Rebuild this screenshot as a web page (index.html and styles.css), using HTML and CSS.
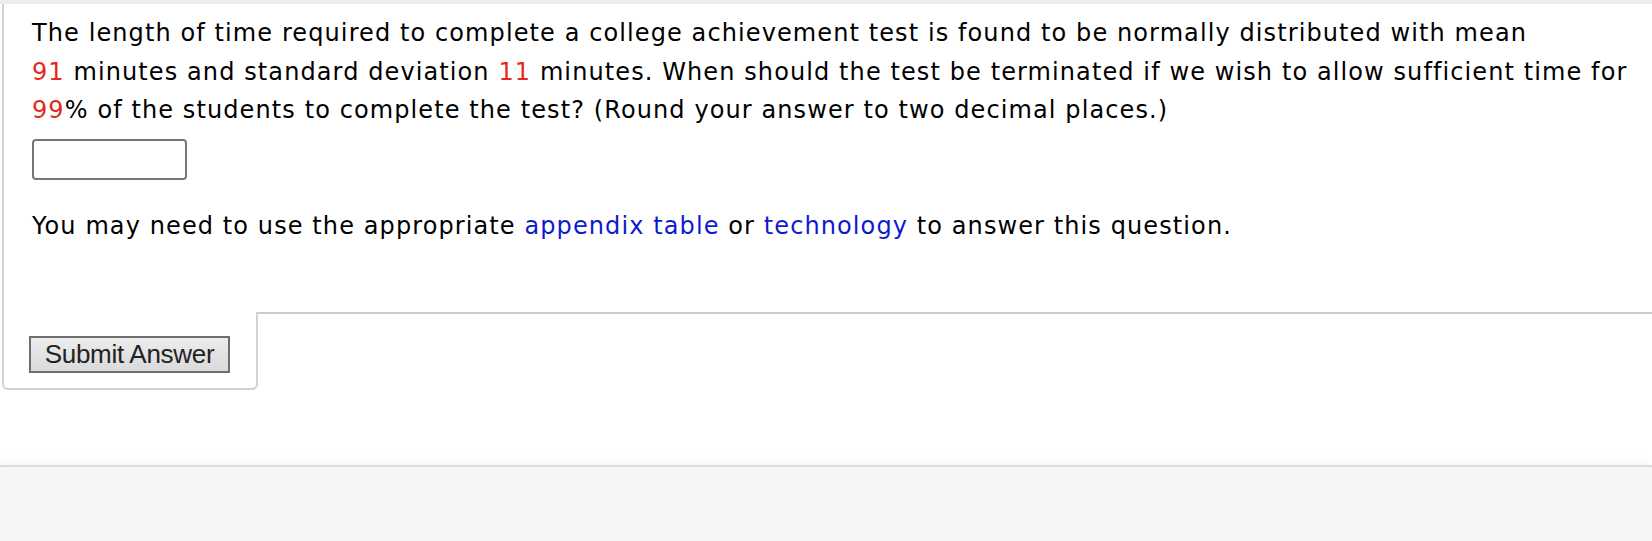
FILE: index.html
```html
<!DOCTYPE html>
<html lang="en">
<head>
    <meta charset="UTF-8">
    <title>Question</title>
    <link rel="stylesheet" href="styles.css">
</head>
<body>
    <div class="page">
        <div class="question">
            <p class="question-text">
                The length of time required to complete a college achievement test is found to be normally distributed with mean<br>
                <span class="num">91</span> minutes and standard deviation <span class="num">11</span> minutes. When should the test be terminated if we wish to allow sufficient time for
                <span class="num">99</span>% of the students to complete the test? (Round your answer to two decimal places.)
            </p>
            <input class="answer-input" type="text">
            <p class="hint">
                You may need to use the appropriate <a href="#" class="link">appendix table</a> or <a href="#" class="link">technology</a> to answer this question.
            </p>
        </div>
        <div class="action-row">
            <div class="submit-tab">
                <button class="submit-button">Submit Answer</button>
            </div>
            <div class="action-rest"></div>
        </div>
    </div>
    <div class="footer"></div>
</body>
</html>
```

FILE: styles.css
```css
* {
    margin: 0;
    padding: 0;
    box-sizing: border-box;
}

body {
    font-family: Verdana, 'DejaVu Sans', sans-serif;
    background: #fff;
    color: #000;
    width: 1652px;
    height: 541px;
    overflow: hidden;
    border-top: 4px solid #ededed;
}

.page {
    height: 461px;
    margin-left: 2px;
}

.question {
    border-left: 2px solid #d2d2d2;
    padding: 10px 4px 0 28px;
    height: 308px;
}

.question-text,
.hint {
    font-size: 24px;
    line-height: 38.5px;
    letter-spacing: 1.1px;
}

.num {
    color: #e8271c;
}

.answer-input {
    display: block;
    margin-top: 9px;
    width: 155px;
    height: 41px;
    border: 2px solid #767676;
    border-radius: 4px;
    background: #fff;
}

.hint {
    margin-top: 27px;
}

.link {
    color: #0c1bd0;
    text-decoration: none;
}

.action-row {
    display: flex;
    align-items: flex-start;
}

.submit-tab {
    width: 256px;
    border-left: 2px solid #d2d2d2;
    border-right: 2px solid #d2d2d2;
    border-bottom: 2px solid #d2d2d2;
    border-radius: 0 0 6px 6px;
    padding: 24px 0 15px 25px;
}

.submit-button {
    display: block;
    width: 201px;
    height: 37px;
    font-family: Arial, 'Liberation Sans', sans-serif;
    font-size: 26px;
    letter-spacing: -0.3px;
    color: #222;
    background: linear-gradient(#ececec, #dadada);
    border: 2px solid #6e6e6e;
    cursor: pointer;
}

.action-rest {
    flex: 1;
    border-top: 2px solid #cbcbcb;
}

.footer {
    height: 76px;
    background: #f6f6f6;
    border-top: 2px solid #dcdcdc;
    box-shadow: 0 -6px 8px rgba(0,0,0,0.025);
}
```
